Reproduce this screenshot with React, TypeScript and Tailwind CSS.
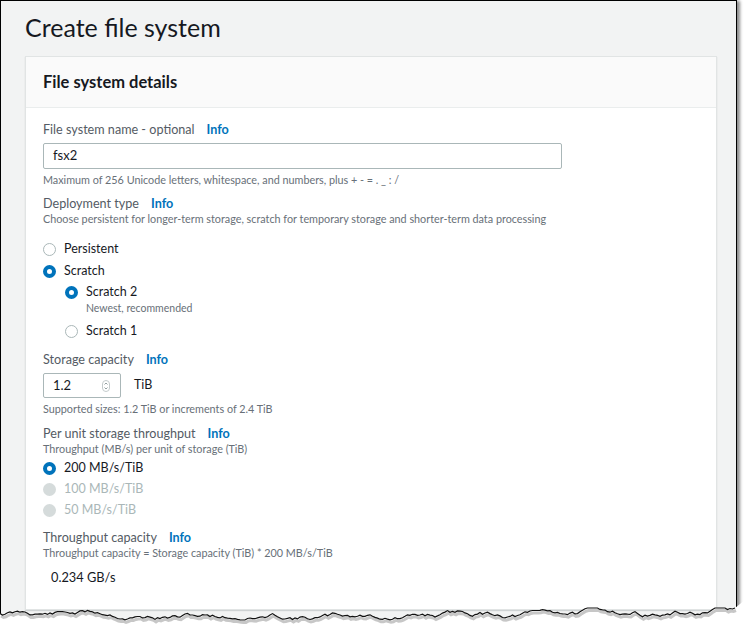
import type { ReactNode } from "react";

type RadioState = "on" | "off" | "disabled";

// jagged "torn paper" line along the bottom of the screenshot
const tearPoints = (() => {
  let seed = 11;
  const rnd = () => {
    seed = (seed * 9301 + 49297) % 233280;
    return seed / 233280;
  };
  const pts: string[] = [];
  let y = 13;
  for (let x = 0; x <= 737; x += 2.5) {
    y += (rnd() - 0.5) * 3.6;
    y = Math.max(8, Math.min(20, y));
    pts.push(`${x},${y.toFixed(1)}`);
  }
  return pts.join(" ");
})();

const Radio = ({ state }: { state: RadioState }) => {
  if (state === "on")
    return <span className="w-[13px] h-[13px] rounded-full border-[4px] border-[#0073bb] bg-white shrink-0" />;
  if (state === "disabled")
    return <span className="w-[13px] h-[13px] rounded-full bg-[#d5dbdb] shrink-0" />;
  return <span className="w-[13px] h-[13px] rounded-full border border-[#aab7b8] bg-white shrink-0" />;
};

const RadioRow = ({
  state,
  children,
  className = "",
}: {
  state: RadioState;
  children: ReactNode;
  className?: string;
}) => (
  <div className={`flex items-center gap-[8px] ${className}`}>
    <Radio state={state} />
    <span
      className={`text-[12.5px] leading-none ${state === "disabled" ? "text-[#aab7b8]" : "text-[#16191f]"}`}
    >
      {children}
    </span>
  </div>
);

const Label = ({ children, className = "" }: { children: ReactNode; className?: string }) => (
  <div className={`flex items-center text-[12.6px] leading-[16px] text-[#545b64] ${className}`}>
    <span>{children}</span>
    <span className="ml-[12px] font-bold text-[#0073bb]">Info</span>
  </div>
);

const Hint = ({ children, className = "" }: { children: ReactNode; className?: string }) => (
  <div className={`text-[10.8px] leading-[14px] text-[#687078] ${className}`}>{children}</div>
);

const Spinner = () => (
  <svg width="8" height="12" viewBox="0 0 8 12" className="ml-auto mr-[10px]">
    <rect x="0.5" y="0.5" width="7" height="11" rx="3.5" fill="none" stroke="#c4cbcc" />
    <path d="M2.5 4.5 L4 3 L5.5 4.5" fill="none" stroke="#879596" strokeWidth="0.9" />
    <path d="M2.5 7.5 L4 9 L5.5 7.5" fill="none" stroke="#879596" strokeWidth="0.9" />
  </svg>
);

export default function App() {
  return (
    <div className="relative w-[745px] h-[630px] bg-white overflow-hidden font-['Lato','Liberation_Sans',sans-serif]">
      <div className="w-[737px] h-[622px] bg-[#f2f3f3] border-l-[1.5px] border-r-[1.5px] border-t border-black shadow-[3px_1px_3px_rgba(0,0,0,0.45)] pl-[24px]">
        <h1 className="mt-[10px] text-[25px] leading-[32px] text-[#16191f]">Create file system</h1>

        <div className="mt-[13px] w-[692px] h-[554px] bg-white border border-[#e1e4e4] shadow-[0_1px_1px_rgba(0,28,36,0.15)]">
          <div className="h-[51px] bg-[#fafafa] border-b border-[#eaeded] flex items-center px-[17px]">
            <h2 className="text-[16.5px] font-bold text-[#16191f]">File system details</h2>
          </div>

          <div className="px-[17px]">
            {/* name */}
            <Label className="mt-[14px]">File system name - optional</Label>
            <div className="mt-[5px] w-[519px] h-[26px] border border-[#aab7b8] rounded-[2px] flex items-center px-[9px] text-[13px] text-[#16191f]">
              fsx2
            </div>
            <Hint className="mt-[4px]">
              Maximum of 256 Unicode letters, whitespace, and numbers, plus + - = . _ : /
            </Hint>

            {/* deployment type */}
            <Label className="mt-[9px]">Deployment type</Label>
            <Hint>
              Choose persistent for longer-term storage, scratch for temporary storage and shorter-term data
              processing
            </Hint>
            <div className="mt-[12px]">
              <RadioRow state="off" className="h-[22px]">
                Persistent
              </RadioRow>
              <RadioRow state="on" className="h-[22px]">
                Scratch
              </RadioRow>
              <div className="pl-[22px]">
                <RadioRow state="on" className="h-[20px]">
                  Scratch 2
                </RadioRow>
                <div className="pl-[21px] text-[10.5px] leading-[12px] text-[#687078]">Newest, recommended</div>
                <RadioRow state="off" className="mt-[6px] h-[22px]">
                  Scratch 1
                </RadioRow>
              </div>
            </div>

            {/* storage capacity */}
            <Label className="mt-[10px]">Storage capacity</Label>
            <div className="mt-[5px] flex items-center">
              <div className="w-[78px] h-[25px] border border-[#aab7b8] rounded-[2px] flex items-center pl-[9px] text-[13px] text-[#16191f]">
                1.2
                <Spinner />
              </div>
              <span className="ml-[13px] text-[12.5px] text-[#16191f]">TiB</span>
            </div>
            <Hint className="mt-[4px]">Supported sizes: 1.2 TiB or increments of 2.4 TiB</Hint>

            {/* throughput per unit */}
            <Label className="mt-[10px]">Per unit storage throughput</Label>
            <Hint>Throughput (MB/s) per unit of storage (TiB)</Hint>
            <div className="mt-[2px]">
              <RadioRow state="on" className="h-[21px]">
                200 MB/s/TiB
              </RadioRow>
              <RadioRow state="disabled" className="h-[21px]">
                100 MB/s/TiB
              </RadioRow>
              <RadioRow state="disabled" className="h-[21px]">
                50 MB/s/TiB
              </RadioRow>
            </div>

            {/* throughput capacity */}
            <Label className="mt-[9px]">Throughput capacity</Label>
            <Hint>Throughput capacity = Storage capacity (TiB) * 200 MB/s/TiB</Hint>
            <div className="mt-[8px] pl-[8px] text-[12.8px] leading-[18px] text-[#16191f]">0.234 GB/s</div>
          </div>
        </div>
      </div>

      {/* torn bottom edge */}
      <svg className="absolute left-0 top-[600px]" width="745" height="30" viewBox="0 0 745 30">
        <polygon points={`${tearPoints} 745,0 745,30 0,30`} fill="white" />
        <polyline
          points={tearPoints}
          fill="none"
          stroke="rgba(0,0,0,0.22)"
          strokeWidth="3"
          transform="translate(1,2.5)"
        />
        <polyline points={tearPoints} fill="none" stroke="#111" strokeWidth="1.2" />
      </svg>
    </div>
  );
}
